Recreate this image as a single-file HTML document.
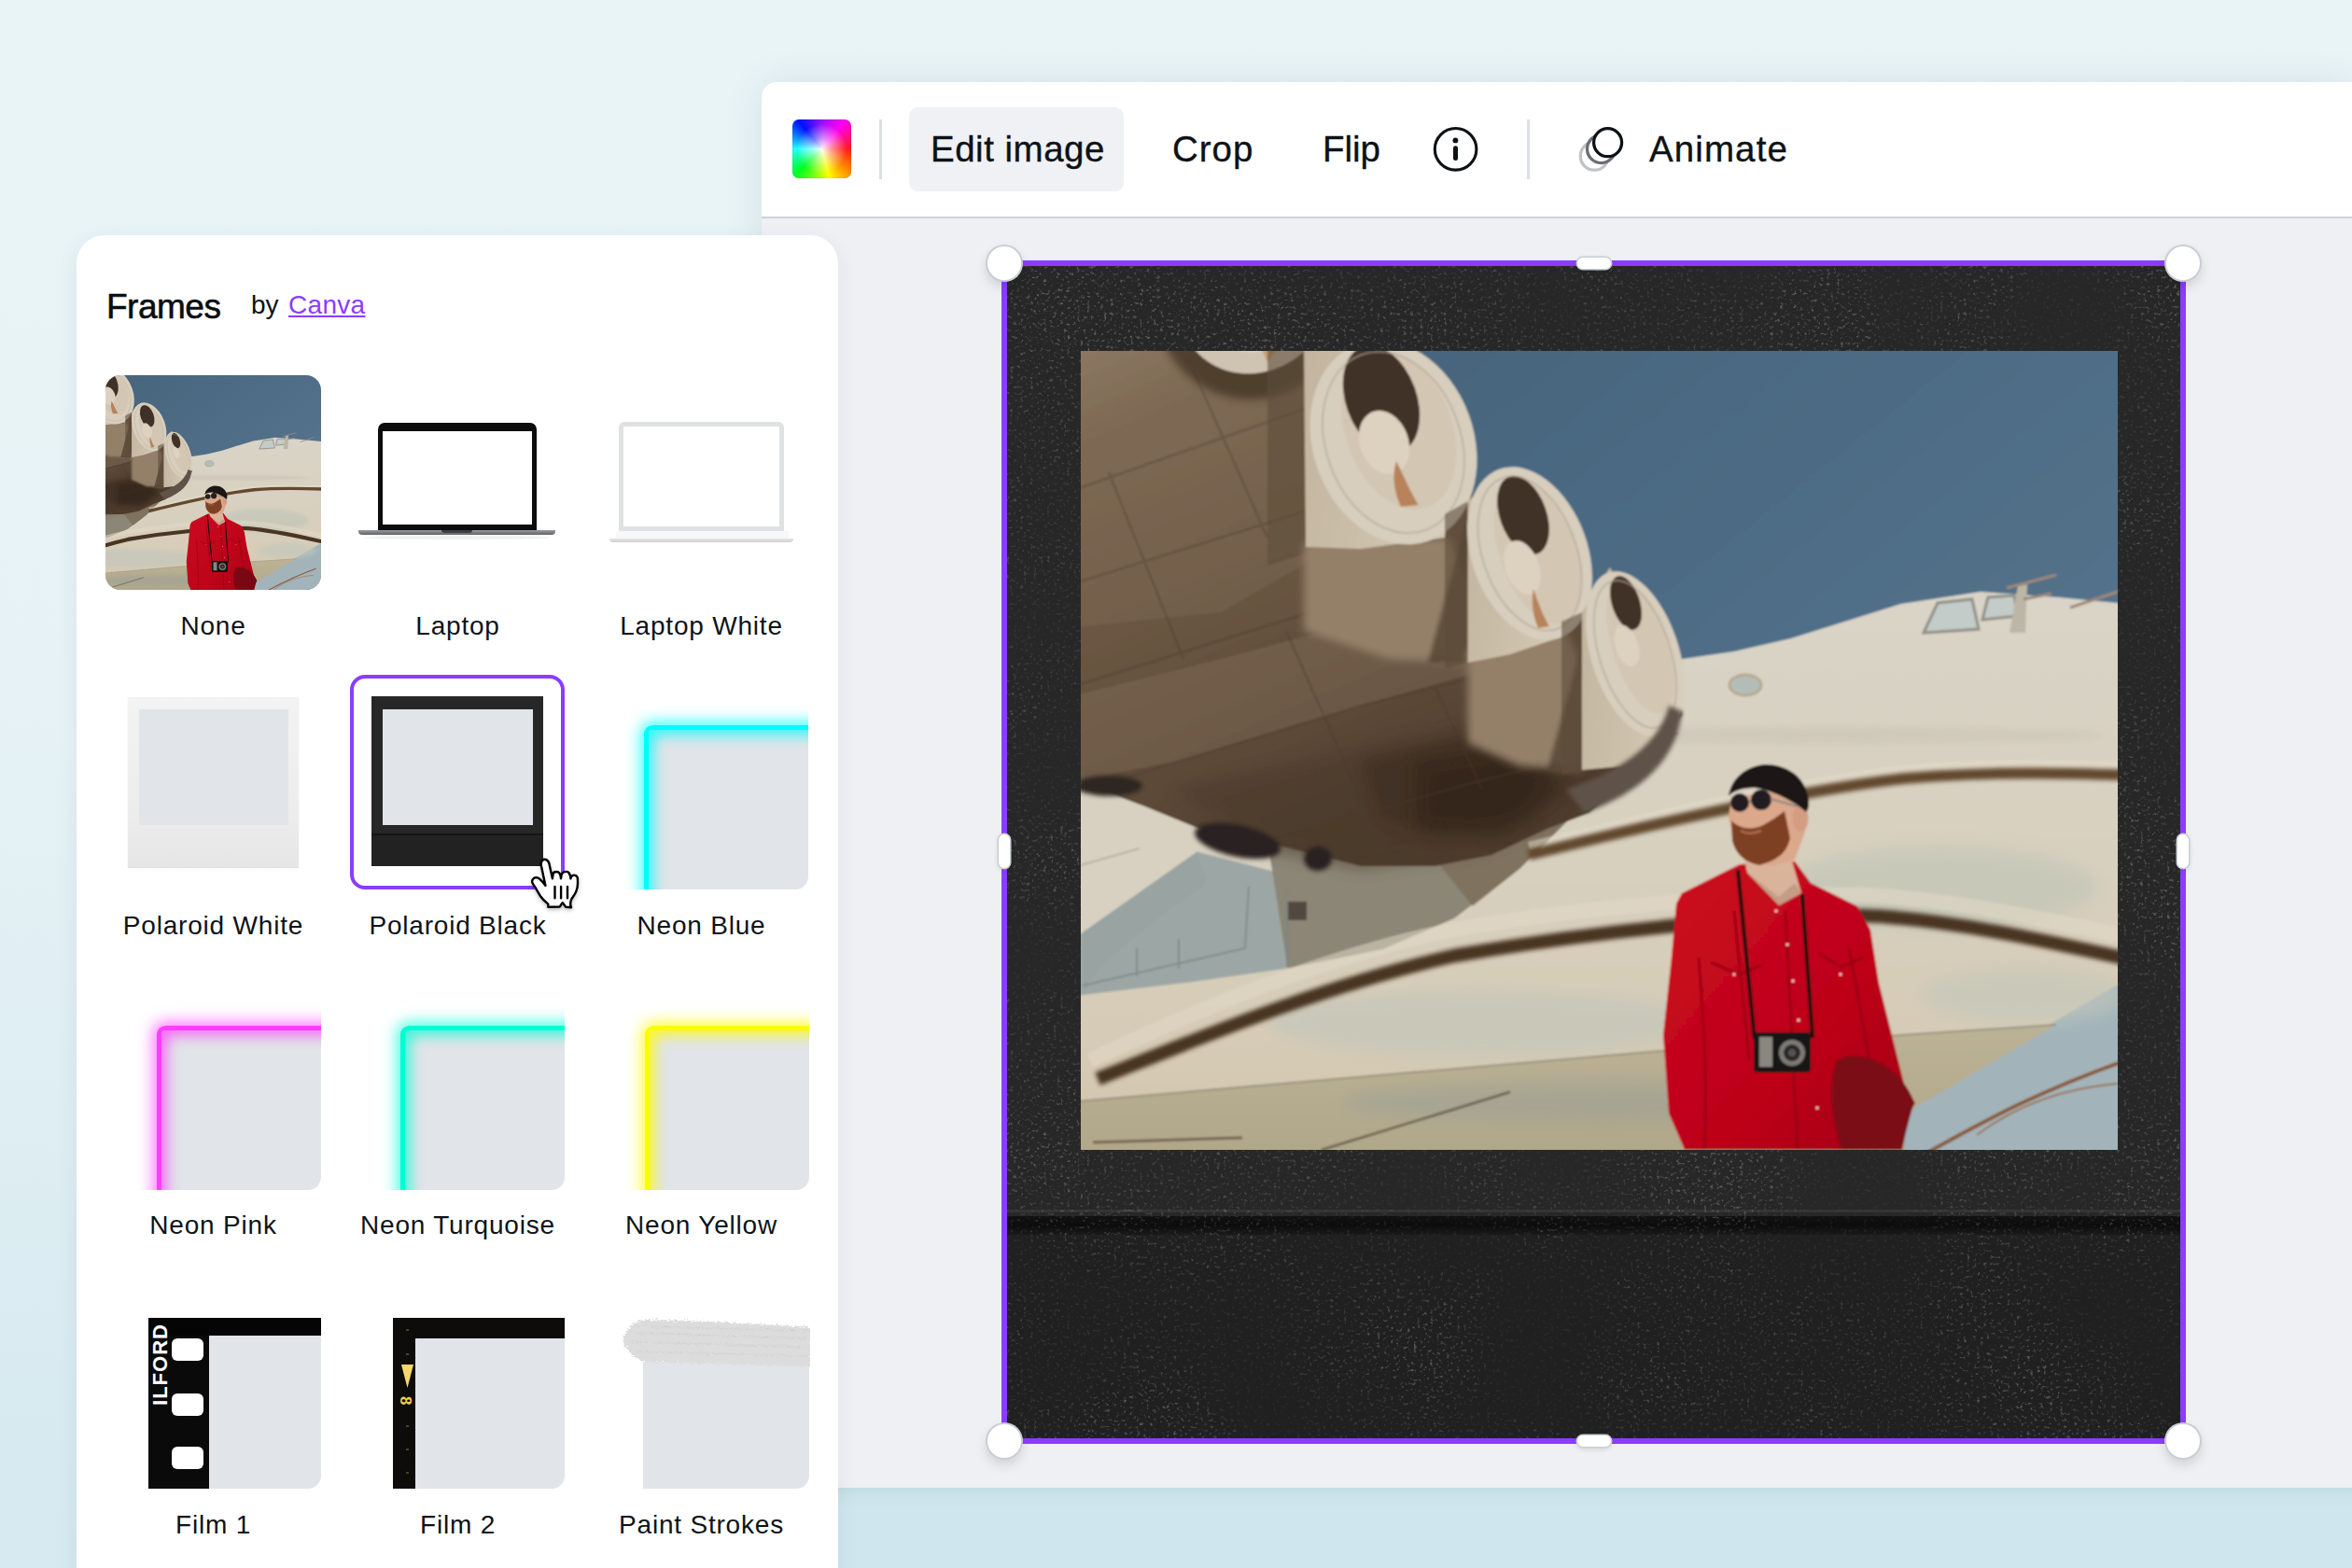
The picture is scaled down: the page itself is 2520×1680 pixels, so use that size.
<!DOCTYPE html>
<html><head><meta charset="utf-8">
<style>
html,body{margin:0;padding:0;}
body{width:2520px;height:1680px;overflow:hidden;position:relative;font-family:"Liberation Sans",sans-serif;
background:linear-gradient(180deg,#e9f4f6 0%,#e6f2f5 45%,#d5e9f0 100%);}
.abs{position:absolute;}
.t{position:absolute;white-space:nowrap;line-height:1;}
#editor{left:816px;top:88px;width:1704px;height:1506px;background:#eef0f4;border-top-left-radius:16px;
box-shadow:0 0 40px rgba(40,90,110,0.10);}
#toolbar{left:816px;top:88px;width:1704px;height:144px;background:#fff;border-top-left-radius:16px;border-bottom:2px solid #cbd2d9;}
#below{left:816px;top:1594px;width:1704px;height:86px;background:linear-gradient(180deg,#c3dde5 0px,#cae2ea 8px,#cfe6ef 22px);}
#panel{left:82px;top:252px;width:816px;height:1500px;background:#fff;border-radius:30px;
box-shadow:0 6px 22px rgba(40,70,90,0.08);}
.lbl{position:absolute;width:231px;text-align:center;font-size:28px;letter-spacing:0.8px;line-height:1;color:#0e1318;white-space:nowrap;}
.handle{position:absolute;width:36px;height:36px;border-radius:50%;background:#fff;box-shadow:0 0 0 2px #c9ced5,0 6px 14px rgba(0,0,0,0.16);}
.pill{position:absolute;background:#fff;border-radius:8px;box-shadow:0 0 0 1.5px #c9ced5,0 2px 6px rgba(0,0,0,0.15);}
.neon{width:201px;height:201px;overflow:hidden;border-bottom-right-radius:14px;background:#fff;}
.neon .ng{position:absolute;left:28px;top:28px;width:200px;height:200px;background:#e1e4e8;border-top-left-radius:8px;}
.neon .nl{position:absolute;left:25px;top:25px;width:300px;height:300px;box-sizing:border-box;border-left:5.5px solid var(--c);border-top:5.5px solid var(--c);border-top-left-radius:9px;
box-shadow:0 0 16px 4px var(--g), inset 10px 10px 14px -4px var(--g);}
</style></head><body>
<svg width="0" height="0" style="position:absolute">
<defs>
<linearGradient id="gSky" x1="0" y1="0" x2="1" y2="1">
<stop offset="0" stop-color="#425f78"/><stop offset="0.6" stop-color="#53718a"/><stop offset="1" stop-color="#6b899b"/></linearGradient>
<linearGradient id="gFus" x1="0" y1="0" x2="0" y2="1">
<stop offset="0" stop-color="#d9d4c7"/><stop offset="0.45" stop-color="#d8d0bf"/><stop offset="0.75" stop-color="#d6cbb6"/><stop offset="1" stop-color="#cfc3aa"/></linearGradient>
<linearGradient id="gWing" x1="0" y1="0" x2="0.5" y2="1">
<stop offset="0" stop-color="#9a866e"/><stop offset="0.22" stop-color="#7a664f"/><stop offset="0.6" stop-color="#66523f"/><stop offset="1" stop-color="#4e3c2d"/></linearGradient>
<linearGradient id="gBody" x1="0" y1="0" x2="1" y2="0.3"><stop offset="0" stop-color="#c2b49d"/><stop offset="1" stop-color="#d2c6b2"/></linearGradient>
<linearGradient id="gShirt" x1="0" y1="0" x2="1" y2="1">
<stop offset="0" stop-color="#cc0a20"/><stop offset="0.6" stop-color="#bd0419"/><stop offset="1" stop-color="#a00214"/></linearGradient>
<linearGradient id="gHull" x1="0" y1="0" x2="0" y2="1">
<stop offset="0" stop-color="#bcb296"/><stop offset="1" stop-color="#ada487"/></linearGradient>
<filter id="fsoft" x="-5%" y="-5%" width="110%" height="110%"><feGaussianBlur stdDeviation="1.1"/></filter>
<filter id="fb2" x="-20%" y="-20%" width="140%" height="140%"><feGaussianBlur stdDeviation="2"/></filter>
<filter id="fb4" x="-20%" y="-20%" width="140%" height="140%"><feGaussianBlur stdDeviation="4"/></filter>
<filter id="fb8" x="-30%" y="-30%" width="160%" height="160%"><feGaussianBlur stdDeviation="8"/></filter>
<g id="photo">
<rect x="-50" y="-50" width="1250" height="1000" fill="url(#gSky)"/>
<polygon points="1160,640 1034,724 883,817 883,900 1160,900" fill="#a2b4ba"/>
<!-- fuselage -->
<polygon points="-50,430 645,330 700,322 761,308 879,271 964,258 1048,264 1160,275 1160,650 1034,724 883,817 883,900 -50,900" fill="url(#gFus)"/>
<ellipse cx="920" cy="575" rx="170" ry="45" fill="#c2c6b8" opacity="0.7" filter="url(#fb8)"/>
<ellipse cx="430" cy="720" rx="230" ry="35" fill="#c0c5ba" opacity="0.6" filter="url(#fb8)"/>
<ellipse cx="1010" cy="690" rx="110" ry="30" fill="#c3c7ba" opacity="0.6" filter="url(#fb8)"/>
<!-- lower hull band -->
<polygon points="-50,808 621,750 1045,722 883,817 883,900 -50,900" fill="url(#gHull)"/>
<ellipse cx="560" cy="805" rx="280" ry="22" fill="#8e9a9a" opacity="0.35" filter="url(#fb8)"/>
<path d="M 258 856 L 460 794" stroke="#5a5040" stroke-width="3" fill="none" opacity="0.7"/>
<path d="M 13 848 L 173 843" stroke="#5a4a38" stroke-width="3" fill="none" opacity="0.7"/>
<path d="M -50 808 L 621 750 L 1045 722" stroke="#8a8470" stroke-width="2" fill="none" opacity="0.7"/>
<!-- lit cream under wing at left -->
<polygon points="-50,440 45,480 120,505 126,533 0,626 -50,660" fill="#d8d1c1"/>
<path d="M 0 551 L 63 533" stroke="#b9b2a2" stroke-width="2"/>
<!-- shadow under wing -->
<polygon points="-50,650 2,623 124.7,536.6 216,560 221.6,575 221.6,661.6 120,676 2,690 -50,700" fill="#9ca7a5"/>
<polygon points="2,690 2,623 124.7,536.6 135,570 80,610 20,660" fill="#93a09f" opacity="0.5"/>
<polygon points="200,525 300,540 380,540 460,520 560,470 520,505 470,555 400,608 323.6,641 221.6,661.6" fill="#8b8676"/>
<polygon points="380,545 460,522 560,472 520,505 470,555 420,595" fill="#7a6a56" opacity="0.7"/>
<g stroke="#7b8685" stroke-width="2" fill="none" opacity="0.8"><path d="M 2 680 L 176 640 L 180 574"/><path d="M 60 670 L 60 640"/><path d="M 105 662 L 105 630"/><path d="M 221 575 L 221 660"/></g>
<rect x="222" y="590" width="20" height="20" fill="#3d3530" opacity="0.75"/>

<!-- cream ridge above groove 2 -->
<path d="M 10 772 C 120 720, 260 660, 400 632 C 560 604, 760 590, 860 596 C 960 604, 1050 624, 1160 648" stroke="#e2d8c6" stroke-width="16" fill="none" transform="translate(0,-12)" opacity="0.55"/>
<!-- groove 2 -->
<path d="M 18 780 C 130 735, 260 680, 400 648 C 560 620, 760 600, 860 606 C 960 614, 1050 636, 1160 660" stroke="#4a3422" stroke-width="15" fill="none" filter="url(#fb2)"/>
<!-- groove 1 -->
<path d="M 480 540 C 600 510, 760 472, 883 458 C 980 450, 1060 452, 1160 456" stroke="#e6ddcc" stroke-width="8" fill="none" transform="translate(0,-10)" opacity="0.5"/>
<path d="M 480 540 C 600 510, 760 472, 883 458 C 980 450, 1060 452, 1160 456" stroke="#62482f" stroke-width="12" fill="none" filter="url(#fb2)"/>
<!-- fuselage details -->
<polygon points="903,302 918,270 955,266 962,298" fill="#c3ccc9" stroke="#8f8f86" stroke-width="3"/>
<polygon points="966,288 972,264 1000,262 1004,284" fill="#c3ccc9" stroke="#8f8f86" stroke-width="3"/>
<polygon points="995,302 1004,252 1014,250 1012,302" fill="#bdb6a6"/>
<path d="M 992 254 L 1045 240 M 1010 266 L 1040 260 M 1060 275 L 1111 258" stroke="#9c8878" stroke-width="3"/>
<ellipse cx="712" cy="358" rx="17" ry="11" fill="#b3bdb8" stroke="#b8a890" stroke-width="3"/>
<ellipse cx="800" cy="412" rx="300" ry="9" fill="#c5c0b2" opacity="0.5" filter="url(#fb4)"/>
<!-- wing mass -->
<polygon points="-50,-50 330,-50 400,60 420,160 460,150 520,200 550,290 580,260 630,300 645,390 600,450 545,495 500,512 440,540 380,552 300,552 216,531 124.7,511 68.5,488 2,463 -50,450" fill="url(#gWing)"/>
<polygon points="-50,0 246,0 246,225 150,280 -50,300" fill="#8c7862" opacity="0.25"/>
<polygon points="-50,380 150,330 300,290 422,300 422,345 300,380 100,440 -50,470" fill="#85715c" opacity="0.4"/><polygon points="300,440 470,400 520,420 480,500 380,520 320,500" fill="#2a1c12" opacity="0.6" filter="url(#fb8)"/>
<polygon points="100,470 330,420 470,400 560,430 500,500 430,535 300,555 200,535" fill="#4a392b" opacity="0.5" filter="url(#fb8)"/>
<polygon points="360,440 470,425 520,470 450,520 360,510" fill="#2e2219" opacity="0.55" filter="url(#fb8)"/>
<g stroke="#4a3a2c" stroke-width="2.5" opacity="0.35" fill="none">
<path d="M -10 150 L 246 60"/><path d="M -10 250 L 246 170"/><path d="M -10 360 L 246 280 L 422 240"/>
<path d="M 40 460 L 300 380 L 545 320"/><path d="M 180 530 L 430 460 L 640 410"/>
<path d="M 120 20 L 200 200"/><path d="M 30 130 L 110 330"/><path d="M 220 300 L 300 480"/><path d="M 380 360 L 430 470"/>
</g>
<ellipse cx="168" cy="525" rx="47" ry="17" transform="rotate(12 168 525)" fill="#2a2420" filter="url(#fb2)"/>
<ellipse cx="254" cy="544" rx="15" ry="13" fill="#2a2420" filter="url(#fb2)"/>
<ellipse cx="30" cy="466" rx="36" ry="11" fill="#2e2823" filter="url(#fb2)"/>
<!-- nacelle 0 partial -->
<path d="M 80 -40 C 90 40, 180 80, 246 30 L 246 -40 Z" fill="#3f3024" opacity="0.75" filter="url(#fb4)"/>
<path d="M 105 -40 C 115 25, 190 45, 240 0 L 240 -40 Z" fill="#cfc4b2"/>
<path d="M 135 -40 C 140 0, 185 12, 225 -10 L 225 -40 Z" fill="#e0d6c6"/>
<path d="M 190 -10 L 215 -10 L 200 12 Z" fill="#c8965e" opacity="0.8"/>
<!-- nacelle 1 -->
<polygon points="200,-10 239,-10 241,217 200,230" fill="#5e4c3b" opacity="0.6"/>
<polygon points="239,205 395,200 419,250 414,334 330,330 239,300" fill="#948069" filter="url(#fb4)"/><polygon points="419,160 414.6,334 372,334" fill="#4a3a2c" opacity="0.7" filter="url(#fb2)"/><polygon points="239,-10 330,-10 400,140 390,200 300,212 241,210" fill="url(#gBody)"/>
<ellipse cx="335" cy="98" rx="86" ry="112" transform="rotate(-20 335 98)" fill="#d8cebd"/>
<ellipse cx="341" cy="85" rx="57" ry="88" transform="rotate(-20 341 85)" fill="#d3c7b3"/>
<ellipse cx="322" cy="52" rx="38" ry="60" transform="rotate(-20 322 52)" fill="#3f3127"/>
<ellipse cx="325" cy="98" rx="26" ry="35" transform="rotate(-20 325 98)" fill="#ddd2c0"/>
<path d="M 338 118 C 348 138, 355 155, 362 165 L 343 167 C 336 152, 333 135, 338 118 Z" fill="#b8825a"/>
<ellipse cx="335" cy="98" rx="72" ry="100" transform="rotate(-20 335 98)" fill="none" stroke="#b1a592" stroke-width="2" opacity="0.6"/>
<!-- nacelle 2 -->
<polygon points="390,175 414.6,161 414.6,334 390,340" fill="#5e4c3b" opacity="0.6"/>
<polygon points="414.6,320 520,300 545,350 537,449 470,445 414.6,420" fill="#948069" filter="url(#fb4)"/><polygon points="545,285 537,449 500,449" fill="#4a3a2c" opacity="0.7" filter="url(#fb2)"/><polygon points="414.6,161 453,125 500,200 516,306 460,325 414.6,334" fill="url(#gBody)"/>
<ellipse cx="481" cy="217" rx="62" ry="96" transform="rotate(-20 481 217)" fill="#d8cebd"/>
<ellipse cx="490" cy="216" rx="41" ry="80" transform="rotate(-20 490 216)" fill="#d3c7b3"/>
<ellipse cx="474" cy="176" rx="25" ry="44" transform="rotate(-20 474 176)" fill="#3f3127"/>
<ellipse cx="473" cy="232" rx="18" ry="30" transform="rotate(-20 473 232)" fill="#ddd2c0"/>
<path d="M 485 255 C 490 270, 496 285, 502 295 L 490 297 C 485 285, 482 270, 485 255 Z" fill="#b8825a"/>
<ellipse cx="481" cy="217" rx="50" ry="86" transform="rotate(-20 481 217)" fill="none" stroke="#b1a592" stroke-width="2" opacity="0.6"/>
<!-- nacelle 3 -->
<polygon points="515,290 537,280 537,449 515,455" fill="#5e4c3b" opacity="0.6"/>
<polygon points="537,280 567,232 600,300 630,420 580,445 537,449" fill="url(#gBody)"/>
<ellipse cx="594" cy="325" rx="47" ry="92" transform="rotate(-18 594 325)" fill="#d8cebd"/>
<ellipse cx="600" cy="318" rx="30" ry="74" transform="rotate(-18 600 318)" fill="#d3c7b3"/>
<ellipse cx="584" cy="270" rx="15" ry="30" transform="rotate(-18 584 270)" fill="#3f3127"/>
<ellipse cx="585" cy="316" rx="12" ry="23" transform="rotate(-18 585 316)" fill="#ddd2c0"/>
<ellipse cx="594" cy="325" rx="38" ry="82" transform="rotate(-18 594 325)" fill="none" stroke="#b1a592" stroke-width="2" opacity="0.6"/>
<path d="M 644 386 C 640 430, 610 470, 540 495 L 520 470 C 580 450, 620 420, 630 380 Z" fill="#5e5348" filter="url(#fb2)"/>
<!-- man -->
<polygon points="644,581 706,550 765,547 782,570 832,595 846,620 855,677 869,733 883,789 894,806 880,828 880,856 647,856 630,817 624,733 633,648 638,592" fill="url(#gShirt)"/>
<g stroke="#86000f" stroke-width="3" opacity="0.55" fill="none">
<path d="M 662 650 C 668 720, 672 790, 668 856"/><path d="M 700 600 L 716 760"/><path d="M 823 640 C 835 700, 845 760, 855 820"/>
<path d="M 675 655 L 705 668 L 730 658"/><path d="M 790 645 L 815 660 L 838 650"/><path d="M 755 600 L 768 856"/>
</g>
<g fill="#f0e6e0"><circle cx="745" cy="600" r="1.6"/><circle cx="757" cy="636" r="1.6"/><circle cx="763" cy="675" r="1.6"/><circle cx="769" cy="717" r="1.6"/><circle cx="775" cy="763" r="1.6"/><circle cx="789" cy="811" r="1.6"/><circle cx="700" cy="668" r="1.4"/><circle cx="814" cy="668" r="1.4"/></g>
<path d="M 810 760 C 840 745, 880 770, 893 805 C 885 830, 880 856, 880 856 L 815 856 C 805 820, 800 790, 810 760 Z" fill="#7a0812"/>
<polygon points="710,540 759,536 772,581 748,594 714,559" fill="#d9b49b"/>
<path d="M 714 559 L 748 594 L 772 581 L 765 570 L 748 585 Z" fill="#b88e78" opacity="0.6"/>
<polygon points="697,478 745,472 772,490 776,515 765,545 740,552 712,546 700,525 694,500" fill="#dba88b"/>
<ellipse cx="771" cy="501" rx="8.5" ry="14" fill="#d49c80"/>
<path d="M 697 503 C 705 512, 720 514, 731 508 C 742 502, 750 496, 754 493 L 760 522 C 757 535, 750 545, 727 551 C 712 548, 702 540, 698 525 Z" fill="#7e4024"/>
<path d="M 707 514 C 714 518, 722 517, 729 514" stroke="#b06a50" stroke-width="2.5" fill="none"/>
<path d="M 694 477 C 697 458, 712 445, 733 443 C 756 443, 774 455, 779 476 C 781 485, 780 492, 777 494 C 766 484, 745 472, 722 468 C 708 468, 698 472, 694 477 Z" fill="#1b1715"/>
<circle cx="706" cy="484" r="10" fill="#241f22"/>
<circle cx="729" cy="481" r="11" fill="#241f22"/>
<path d="M 716 483 L 718 482 M 739 480 L 768 488" stroke="#8a8480" stroke-width="2" fill="none"/>
<path d="M 704 556 L 722 738 M 773 582 L 784 736" stroke="#141010" stroke-width="4" fill="none"/>
<rect x="721" y="730" width="61" height="43" rx="4" fill="#141212"/>
<rect x="727" y="735" width="14" height="32" fill="#8a8680"/>
<circle cx="762" cy="752" r="14" fill="#7e7a76"/>
<circle cx="762" cy="752" r="9" fill="#2a2828"/>
<circle cx="762" cy="752" r="4" fill="#555"/>
<!-- branch -->
<path d="M 905 860 C 960 830, 1020 795, 1120 760" stroke="#8a5a38" stroke-width="4" fill="none"/>
<path d="M 960 840 C 1000 810, 1050 790, 1111 785" stroke="#9c7050" stroke-width="2" fill="none"/>
</g>
</defs></svg>

<div id="editor" class="abs"></div>
<div id="below" class="abs"></div>
<div id="toolbar" class="abs"></div>

<!-- toolbar contents -->
<div class="abs" style="left:849px;top:128px;width:63px;height:63px;border-radius:7px;overflow:hidden;box-shadow:inset 0 0 2px rgba(0,0,0,0.2);
background:conic-gradient(from 0deg at 50% 50%, #9a10ff 0deg, #ff00f0 40deg, #ff1a1a 90deg, #ff8a00 130deg, #ffff00 165deg, #00ff20 225deg, #20ffff 270deg, #0010ff 320deg, #9a10ff 360deg);">
<div style="position:absolute;inset:0;background:radial-gradient(circle at 50% 50%,rgba(255,255,255,0.95) 0%,rgba(255,255,255,0.5) 25%,rgba(255,255,255,0) 60%);"></div></div>
<div class="abs" style="left:942px;top:128px;width:3px;height:64px;background:#dcdfe4;"></div>
<div class="abs" style="left:974px;top:115px;width:230px;height:90px;background:#f0f1f4;border-radius:9px;"></div>
<div class="t" id="t_edit" style="left:997px;letter-spacing:0.5px;top:141px;font-size:38.5px;color:#0d1216;-webkit-text-stroke:0.35px #0d1216;">Edit image</div>
<div class="t" id="t_crop" style="left:1256px;letter-spacing:1px;top:141px;font-size:38.5px;color:#0d1216;-webkit-text-stroke:0.35px #0d1216;">Crop</div>
<div class="t" id="t_flip" style="left:1417px;top:141px;font-size:38.5px;color:#0d1216;-webkit-text-stroke:0.35px #0d1216;">Flip</div>
<svg class="abs" style="left:1532px;top:133px" width="54" height="54" viewBox="0 0 54 54">
<circle cx="27.6" cy="26.8" r="22.3" fill="none" stroke="#0d1216" stroke-width="3.1"/>
<circle cx="27.4" cy="17.4" r="2.9" fill="#0d1216"/>
<rect x="25" y="23.2" width="5" height="15.7" rx="2.5" fill="#0d1216"/>
</svg>
<div class="abs" style="left:1636px;top:128px;width:3px;height:64px;background:#dcdfe4;"></div>
<svg class="abs" style="left:1680px;top:125px" width="80" height="70" viewBox="0 0 80 70">
<circle cx="28.3" cy="42.2" r="15" fill="#fff" stroke="#c0c3c6" stroke-width="3.3"/>
<circle cx="35.5" cy="34.6" r="15" fill="#fff" stroke="#6a6e73" stroke-width="3.3"/>
<circle cx="42.6" cy="27.7" r="15" fill="#fff" stroke="#0d1216" stroke-width="3.3"/>
</svg>
<div class="t" id="t_anim" style="left:1767px;letter-spacing:1.1px;top:141px;font-size:38.5px;color:#0d1216;-webkit-text-stroke:0.35px #0d1216;">Animate</div>

<!-- panel -->
<div id="panel" class="abs"></div>
<div class="t" id="t_frames" style="left:114px;top:310px;font-size:37px;letter-spacing:-0.5px;color:#0a0d10;-webkit-text-stroke:0.6px #0a0d10;">Frames</div>
<div class="t" id="t_by" style="left:269px;top:313px;font-size:28px;color:#0d1216;">by</div>
<div class="t" id="t_canva" style="left:309px;top:313px;font-size:28px;letter-spacing:0.3px;color:#8b3dff;text-decoration:underline;text-decoration-thickness:1.5px;text-underline-offset:1.5px;">Canva</div>

<!-- labels -->
<div class="lbl" style="left:113px;top:657px;">None</div>
<div class="lbl" style="left:375px;top:657px;">Laptop</div>
<div class="lbl" style="left:636px;top:657px;">Laptop White</div>
<div class="lbl" style="left:113px;top:978px;">Polaroid White</div>
<div class="lbl" style="left:375px;top:978px;">Polaroid Black</div>
<div class="lbl" style="left:636px;top:978px;">Neon Blue</div>
<div class="lbl" style="left:113px;top:1299px;">Neon Pink</div>
<div class="lbl" style="left:375px;top:1299px;">Neon Turquoise</div>
<div class="lbl" style="left:636px;top:1299px;">Neon Yellow</div>
<div class="lbl" style="left:113px;top:1620px;">Film 1</div>
<div class="lbl" style="left:375px;top:1620px;">Film 2</div>
<div class="lbl" style="left:636px;top:1620px;">Paint Strokes</div>

<!-- canvas frame -->
<div class="abs" style="left:1073px;top:279px;width:1269px;height:1268px;background:#8b3dff;"></div>
<div class="abs" id="polaroid" style="left:1079px;top:285px;width:1257px;height:1256px;background:#272727;"></div>

<!-- polaroid bottom band -->
<div class="abs" style="left:1079px;top:1296px;width:1257px;height:3px;background:#3a3a3a;opacity:0.7"></div>
<div class="abs" style="left:1079px;top:1303px;width:1257px;height:20px;background:linear-gradient(180deg,#111 0%,#0c0c0c 50%,#1a1a1a 100%);"></div>
<div class="abs" style="left:1079px;top:1323px;width:1257px;height:218px;background:#202020;"></div>

<!-- frame texture -->
<svg class="abs" style="left:1079px;top:285px" width="1257" height="1256" viewBox="0 0 1257 1256">
<defs>
<filter id="speck" x="0" y="0" width="100%" height="100%">
<feTurbulence type="fractalNoise" baseFrequency="0.28" numOctaves="3" seed="11" result="n"/>
<feColorMatrix in="n" type="matrix" values="0 0 0 0 1  0 0 0 0 1  0 0 0 0 1  4 0 0 0 -2.35" result="a"/>
<feTurbulence type="fractalNoise" baseFrequency="0.006" numOctaves="2" seed="5" result="m"/>
<feColorMatrix in="m" type="matrix" values="0 0 0 0 1  0 0 0 0 1  0 0 0 0 1  2.2 0 0 0 -0.7" result="mm"/>
<feComposite in="a" in2="mm" operator="arithmetic" k1="1" k2="0.25" k3="0" k4="0" result="c"/>
<feComposite in="c" in2="SourceGraphic" operator="in"/>
</filter>
</defs>
<rect width="1257" height="1256" fill="#fff" filter="url(#speck)" opacity="0.24"/>
</svg>
<!-- main photo -->
<svg class="abs" style="left:1158px;top:376px" width="1111" height="856" viewBox="0 0 1111 856"><g filter="url(#fsoft)"><use href="#photo"/></g></svg>
<!-- thumb: None -->
<div class="abs" style="left:113px;top:402px;width:231px;height:230px;border-radius:16px;overflow:hidden;">
<svg width="231" height="230" viewBox="0 0 231 230"><g transform="translate(-88,-5.5) scale(0.28)"><use href="#photo"/></g></svg></div>

<!-- thumb: Laptop -->
<div class="abs" style="left:405px;top:453px;width:170px;height:115px;background:#0c0c0c;border-radius:7px 7px 0 0;"></div>
<div class="abs" style="left:410px;top:462px;width:160px;height:100px;background:#fff;"></div>
<div class="abs" style="left:384px;top:568px;width:211px;height:5px;border-radius:0 0 4px 4px;background:linear-gradient(180deg,#9a9ca0,#5f6165);"></div>
<div class="abs" style="left:473px;top:568px;width:33px;height:3px;background:#3c3e42;border-radius:0 0 3px 3px;"></div>
<div class="abs" style="left:390px;top:574px;width:200px;height:4px;background:rgba(0,0,0,0.06);border-radius:50%;"></div>

<!-- thumb: Laptop White -->
<div class="abs" style="left:663px;top:452px;width:167px;height:107px;border:5px solid #e0e1e2;border-bottom-width:5px;border-radius:6px 6px 0 0;background:#fff;"></div>
<div class="abs" style="left:653px;top:577px;width:197px;height:4px;border-radius:0 0 4px 4px;background:linear-gradient(180deg,#e6e6e6,#cfd0d1);"></div>
<div class="abs" style="left:660px;top:569px;width:185px;height:8px;background:#f8f8f8;"></div>

<!-- thumb: Polaroid White -->
<div class="abs" style="left:137px;top:747px;width:183px;height:182px;background:linear-gradient(180deg,#f3f3f3 0%,#ececec 70%,#e6e6e6 100%);box-shadow:0 1px 1px rgba(0,0,0,0.12);"></div>
<div class="abs" style="left:149px;top:760px;width:160px;height:124px;background:#e1e4e8;"></div>

<!-- thumb: Polaroid Black (selected) -->
<div class="abs" style="left:375px;top:723px;width:222px;height:222px;border:4px solid #8b3dff;border-radius:16px;"></div>
<div class="abs" style="left:398px;top:746px;width:184px;height:182px;background:#272727;"></div>
<div class="abs" style="left:398px;top:893px;width:184px;height:33px;background:#222;border-top:2px solid #141414;"></div>
<div class="abs" style="left:410px;top:760px;width:161px;height:124px;background:#e1e4e8;"></div>

<!-- neon thumbs -->
<div class="abs neon" style="left:665px;top:752px;--c:#00fdfd;--g:rgba(0,253,253,0.75);"><div class="ng"></div><div class="nl"></div></div>
<div class="abs neon" style="left:143px;top:1074px;--c:#ff3dff;--g:rgba(255,61,255,0.7);"><div class="ng"></div><div class="nl"></div></div>
<div class="abs neon" style="left:404px;top:1074px;--c:#00fdd6;--g:rgba(0,253,214,0.7);"><div class="ng"></div><div class="nl"></div></div>
<div class="abs neon" style="left:666px;top:1074px;--c:#fdfb00;--g:rgba(253,251,0,0.75);"><div class="ng"></div><div class="nl"></div></div>

<!-- Film 1 -->
<div class="abs" style="left:159px;top:1412px;width:185px;height:183px;border-bottom-right-radius:14px;overflow:hidden;background:#e1e4e8;">
<div class="abs" style="left:0;top:0;width:65px;height:183px;background:#0a0a0a;"></div>
<div class="abs" style="left:0;top:0;width:185px;height:19px;background:#050505;"></div>
<div class="abs" style="left:25px;top:22px;width:34px;height:24px;background:#fff;border-radius:6px;"></div>
<div class="abs" style="left:25px;top:81px;width:34px;height:24px;background:#fff;border-radius:6px;"></div>
<div class="abs" style="left:25px;top:138px;width:34px;height:24px;background:#fff;border-radius:6px;"></div>
<div class="abs" style="left:-33px;top:36px;width:90px;height:20px;transform:rotate(-90deg);transform-origin:50% 50%;color:#fff;font-weight:bold;font-size:22px;line-height:20px;text-align:center;letter-spacing:1px;top:40px;left:-32px;">ILFORD</div>
</div>

<!-- Film 2 -->
<div class="abs" style="left:421px;top:1412px;width:184px;height:183px;border-bottom-right-radius:14px;overflow:hidden;background:#e1e4e8;">
<div class="abs" style="left:0;top:0;width:24px;height:183px;background:#0e0c0a;"></div>
<div class="abs" style="left:0;top:0;width:184px;height:22px;background:#0e0c0a;"></div>
<svg class="abs" style="left:0;top:0" width="24" height="183"><polygon points="9,50 22,50 15.5,75" fill="#f6d86a"/>
<text x="0" y="0" transform="translate(8,84) rotate(90)" font-family="Liberation Sans" font-weight="bold" font-size="17" fill="#f0cc50">8</text>
<g fill="#3d4a22"><rect x="14" y="12" width="3" height="2"/><rect x="14" y="38" width="3" height="2"/><rect x="14" y="115" width="3" height="2"/><rect x="14" y="140" width="3" height="2"/><rect x="14" y="165" width="3" height="2"/></g></svg>
</div>

<!-- Paint strokes -->
<div class="abs" style="left:689px;top:1459px;width:178px;height:136px;background:#e1e4e8;border-bottom-right-radius:14px;"></div>
<svg class="abs" style="left:662px;top:1404px" width="206" height="64" viewBox="-4 -6 206 64">
<defs><filter id="rough" x="-10%" y="-20%" width="120%" height="140%"><feTurbulence type="fractalNoise" baseFrequency="0.35 0.9" numOctaves="2" seed="4" result="t"/><feDisplacementMap in="SourceGraphic" in2="t" scale="7" xChannelSelector="R" yChannelSelector="G"/></filter></defs>
<g filter="url(#rough)">
<path d="M 21 4 C 60 4, 140 8, 203 12 L 203 54 L 23 49 C 12 44, 4 36, 1 25 C 5 15, 12 7, 21 4 Z" fill="#dcdcdc"/>
<g stroke="#d2d2d2" stroke-width="1.2" opacity="0.9"><path d="M 14 18 L 201 24"/><path d="M 10 28 L 201 33"/><path d="M 16 38 L 201 43"/><path d="M 30 11 L 201 16"/></g>
</g>
</svg>

<!-- cursor -->
<svg class="abs" style="left:550px;top:900px;filter:drop-shadow(0 2px 2px rgba(0,0,0,0.25))" width="90" height="90" viewBox="0 0 90 90">
<path d="M 33.3 20.7 C 30 21, 29.5 25, 29.9 27.5 L 34.4 48.8 C 31 44, 28 40.5, 25 40.2 C 21 40, 19.5 43.5, 20.5 46 C 22 49, 24 51, 24.7 52.8 L 28.7 59.7 C 31 63, 34 66, 37.3 68.6 L 37.3 71.8 L 49.4 71.6 C 50.5 71, 51.5 68, 52.8 67.2 C 54 68, 55 71, 56.3 71.8 L 62 72.3 C 61 70, 61 66, 62.5 63 C 66 58, 69 54, 69 46 L 68.9 41.3 C 68.5 37.5, 64 36.5, 62 39.5 L 61.4 41.3 C 61 36.5, 59 34, 57.4 33.9 C 54 33.7, 52.5 35, 51.7 36.7 L 51 41.3 C 50.5 36, 49 34, 46.5 34 C 44 34, 42.5 35, 42.5 37 L 41.9 41.3 L 38.2 24.5 C 37 21.5, 35.5 20.6, 33.3 20.7 Z" fill="#fff" stroke="#000" stroke-width="2.4" stroke-linejoin="round"/>
<path d="M 44.5 50 L 44.5 62.3 M 51.1 50 L 51.1 62.3 M 58 50 L 58 62.3" stroke="#000" stroke-width="2.4" stroke-linecap="round"/>
</svg>

<!-- handles -->
<div class="handle" style="left:1058px;top:264px;"></div>
<div class="handle" style="left:2321px;top:264px;"></div>
<div class="handle" style="left:1058px;top:1526px;"></div>
<div class="handle" style="left:2321px;top:1526px;"></div>
<div class="pill" style="left:1690px;top:276px;width:36px;height:12px;"></div>
<div class="pill" style="left:1690px;top:1538px;width:36px;height:12px;"></div>
<div class="pill" style="left:1070px;top:894px;width:12px;height:36px;"></div>
<div class="pill" style="left:2333px;top:894px;width:12px;height:36px;"></div>

</body></html>
